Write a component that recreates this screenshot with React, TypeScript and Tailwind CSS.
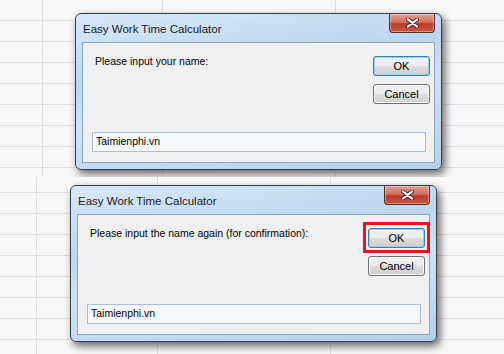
import React from 'react';

const font = "font-['Liberation_Sans',Arial,sans-serif]";

const CloseButton = () => (
  <div className="w-[46px] h-[19px] rounded-b-[4px] border border-t-0 border-[#5a2a25] bg-[linear-gradient(#e0a195,#d0705f_45%,#b83c2b_55%,#c9563f)] flex items-center justify-center shadow-[inset_0_0_0_1px_rgba(255,255,255,0.35)]">
    <svg width="13" height="10" viewBox="0 0 13 10">
      <path d="M2 1.5 L11 8.5 M11 1.5 L2 8.5" stroke="#4a2320" strokeWidth="4" strokeLinecap="round" />
      <path d="M2 1.5 L11 8.5 M11 1.5 L2 8.5" stroke="#ffffff" strokeWidth="2.2" strokeLinecap="round" />
    </svg>
  </div>
);

const WinButton = ({ label, focused }: { label: string; focused?: boolean }) => (
  <div
    className={
      'w-[57px] h-[20px] rounded-[3px] border flex items-center justify-center text-[11px] text-black bg-[linear-gradient(#f2f2f2,#ebebeb_50%,#dddddd_50%,#cfcfcf)] ' +
      (focused
        ? 'border-[#3c7fb1] shadow-[inset_0_0_0_1px_#8fd2f2]'
        : 'border-[#707070] shadow-[inset_0_0_0_1px_#fbfbfb]')
    }
  >
    {label}
  </div>
);

const Dialog = ({ label, annotated }: { label: string; annotated?: boolean }) => (
  <div className="w-[367px] h-[157px] rounded-[6px] border border-[#34404e] bg-[linear-gradient(172deg,#d8e8f8,#bdd6f0_35%,#cfe2f6_55%,#b5d0ee)] shadow-[3px_4px_9px_rgba(0,0,0,0.6)] flex flex-col">
    <div className="h-[28px] flex justify-between pl-[7px] pr-[6px]">
      <div className="pt-[8px] text-[11.5px] leading-[14px] text-[#1a1a1a]">Easy Work Time Calculator</div>
      <CloseButton />
    </div>
    <div className="mx-[6px] h-[121px] border border-[#8ea3bc] bg-[#f0f0f0] flex flex-col">
      <div className="flex justify-between">
        <div className="pl-[12px] pt-[12px] text-[10.5px] leading-[12px] text-black">{label}</div>
        <div className="pt-[13px] pr-[4px] flex flex-col gap-[8px]">
          <div className="relative">
            {annotated && <div className="absolute -left-[5px] -right-[5px] -top-[6px] -bottom-[5px] border-[3px] border-[#e8141b]" />}
            <WinButton label="OK" focused />
          </div>
          <WinButton label="Cancel" />
        </div>
      </div>
      <div className="mt-auto mb-[10px] ml-[9px] w-[334px] h-[20px] border border-[#a9c0da] bg-[#f6f8fa] pl-[3px] flex items-center text-[10.5px] text-black">
        Taimienphi.vn
      </div>
    </div>
  </div>
);

export default function App() {
  return (
    <div className={'w-[504px] h-[354px] overflow-hidden flex flex-col ' + font}>
      <section className="h-[177px] pl-[75px] pt-[13px] bg-[#f8f8f8] bg-[linear-gradient(to_right,transparent_42px,#e1e1e1_42px,#e1e1e1_43px,transparent_43px,transparent_162px,#e1e1e1_162px,#e1e1e1_163px,transparent_163px,transparent_335px,#e1e1e1_335px,#e1e1e1_336px,transparent_336px),repeating-linear-gradient(to_bottom,transparent_0px,transparent_20px,#e1e1e1_20px,#e1e1e1_21px)]">
        <Dialog label="Please input your name:" />
      </section>
      <section className="h-[177px] pl-[70px] pt-[8px] bg-[#f8f8f8] bg-[linear-gradient(to_right,transparent_36px,#e1e1e1_36px,#e1e1e1_37px,transparent_37px,transparent_157px,#e1e1e1_157px,#e1e1e1_158px,transparent_158px,transparent_330px,#e1e1e1_330px,#e1e1e1_331px,transparent_331px),repeating-linear-gradient(to_bottom,transparent_0px,transparent_15px,#e1e1e1_15px,#e1e1e1_16px,transparent_16px,transparent_21px)]">
        <Dialog label="Please input the name again (for confirmation):" annotated />
      </section>
    </div>
  );
}
